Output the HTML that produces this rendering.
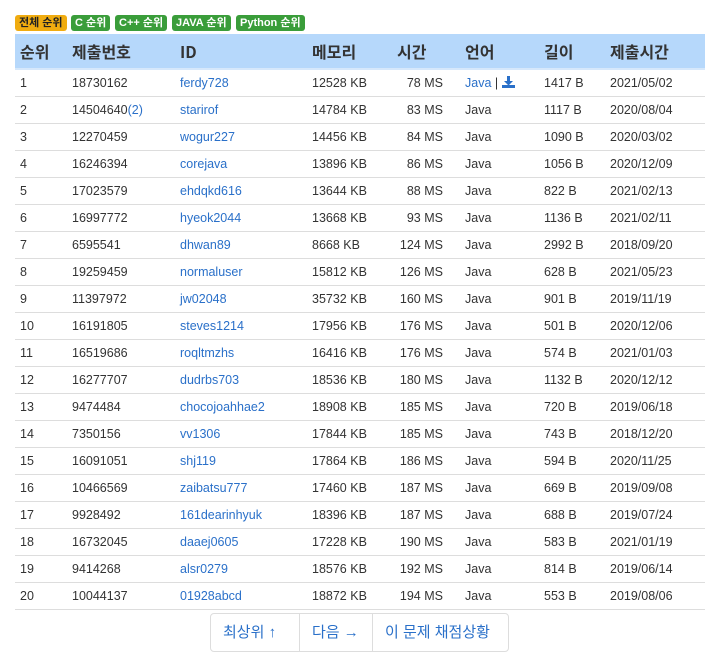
<!DOCTYPE html><html><head><meta charset="utf-8"><style>
body{margin:0;background:#fff;font-family:"Liberation Sans","Noto Sans CJK KR",sans-serif;color:#333;width:718px;height:656px;overflow:hidden;position:relative}
.b{position:absolute;top:15px;height:16px;line-height:16px;font-size:11px;font-weight:bold;color:#fff;border-radius:3px;padding:0 4px;background:#3a9d3a}
table{position:absolute;left:15px;top:34px;width:690px;border-collapse:collapse;font-size:12.5px;table-layout:fixed}
th{background:#b6d8fb;height:34px;text-align:left;font-size:16px;font-weight:bold;padding:0 0 0 5px;border-bottom:2px solid #d6e8fb;font-family:"Noto Sans CJK KR",sans-serif}
td{height:26px;padding:0 0 0 5px;border-top:1px solid #ddd;white-space:nowrap}
a{color:#2a70c9;text-decoration:none}
.r{text-align:right;padding-right:17px}
.btns{position:absolute;left:210px;top:613px;height:37px;border:1px solid #ddd;border-radius:4px;display:flex;font-size:15px;color:#2a70c9}
.btns div{padding:0 12px;line-height:37px;border-left:1px solid #ddd}
.btns div:first-child{border-left:none}
tr:last-child td{border-bottom:1px solid #ddd}
</style></head><body>
<div class="b" style="left:15px;background:#f0ac10;color:#222">전체 순위</div>
<div class="b" style="left:71px">C 순위</div>
<div class="b" style="left:115px">C++ 순위</div>
<div class="b" style="left:172px">JAVA 순위</div>
<div class="b" style="left:236px">Python 순위</div>
<table>
<colgroup><col style="width:52px"><col style="width:108px"><col style="width:132px"><col style="width:80px"><col style="width:73px"><col style="width:79px"><col style="width:66px"><col></colgroup>
<tr><th>순위</th><th>제출번호</th><th>ID</th><th>메모리</th><th style="padding-left:10px">시간</th><th>언어</th><th>길이</th><th>제출시간</th></tr>
<tr><td>1</td><td>18730162</td><td><a>ferdy728</a></td><td>12528 KB</td><td class="r">78 MS</td><td><a>Java</a> | <svg width="13" height="12" viewBox="0 0 13 12" style="vertical-align:-1px"><path d="M5 0h3v5h3l-4.5 4.5L2 5h3z" fill="#2a70c9"/><rect x="0" y="9" width="13" height="3" fill="#2a70c9"/></svg></td><td>1417 B</td><td>2021/05/02</td></tr>
<tr><td>2</td><td>14504640<a>(2)</a></td><td><a>starirof</a></td><td>14784 KB</td><td class="r">83 MS</td><td>Java</td><td>1117 B</td><td>2020/08/04</td></tr>
<tr><td>3</td><td>12270459</td><td><a>wogur227</a></td><td>14456 KB</td><td class="r">84 MS</td><td>Java</td><td>1090 B</td><td>2020/03/02</td></tr>
<tr><td>4</td><td>16246394</td><td><a>corejava</a></td><td>13896 KB</td><td class="r">86 MS</td><td>Java</td><td>1056 B</td><td>2020/12/09</td></tr>
<tr><td>5</td><td>17023579</td><td><a>ehdqkd616</a></td><td>13644 KB</td><td class="r">88 MS</td><td>Java</td><td>822 B</td><td>2021/02/13</td></tr>
<tr><td>6</td><td>16997772</td><td><a>hyeok2044</a></td><td>13668 KB</td><td class="r">93 MS</td><td>Java</td><td>1136 B</td><td>2021/02/11</td></tr>
<tr><td>7</td><td>6595541</td><td><a>dhwan89</a></td><td>8668 KB</td><td class="r">124 MS</td><td>Java</td><td>2992 B</td><td>2018/09/20</td></tr>
<tr><td>8</td><td>19259459</td><td><a>normaluser</a></td><td>15812 KB</td><td class="r">126 MS</td><td>Java</td><td>628 B</td><td>2021/05/23</td></tr>
<tr><td>9</td><td>11397972</td><td><a>jw02048</a></td><td>35732 KB</td><td class="r">160 MS</td><td>Java</td><td>901 B</td><td>2019/11/19</td></tr>
<tr><td>10</td><td>16191805</td><td><a>steves1214</a></td><td>17956 KB</td><td class="r">176 MS</td><td>Java</td><td>501 B</td><td>2020/12/06</td></tr>
<tr><td>11</td><td>16519686</td><td><a>roqltmzhs</a></td><td>16416 KB</td><td class="r">176 MS</td><td>Java</td><td>574 B</td><td>2021/01/03</td></tr>
<tr><td>12</td><td>16277707</td><td><a>dudrbs703</a></td><td>18536 KB</td><td class="r">180 MS</td><td>Java</td><td>1132 B</td><td>2020/12/12</td></tr>
<tr><td>13</td><td>9474484</td><td><a>chocojoahhae2</a></td><td>18908 KB</td><td class="r">185 MS</td><td>Java</td><td>720 B</td><td>2019/06/18</td></tr>
<tr><td>14</td><td>7350156</td><td><a>vv1306</a></td><td>17844 KB</td><td class="r">185 MS</td><td>Java</td><td>743 B</td><td>2018/12/20</td></tr>
<tr><td>15</td><td>16091051</td><td><a>shj119</a></td><td>17864 KB</td><td class="r">186 MS</td><td>Java</td><td>594 B</td><td>2020/11/25</td></tr>
<tr><td>16</td><td>10466569</td><td><a>zaibatsu777</a></td><td>17460 KB</td><td class="r">187 MS</td><td>Java</td><td>669 B</td><td>2019/09/08</td></tr>
<tr><td>17</td><td>9928492</td><td><a>161dearinhyuk</a></td><td>18396 KB</td><td class="r">187 MS</td><td>Java</td><td>688 B</td><td>2019/07/24</td></tr>
<tr><td>18</td><td>16732045</td><td><a>daaej0605</a></td><td>17228 KB</td><td class="r">190 MS</td><td>Java</td><td>583 B</td><td>2021/01/19</td></tr>
<tr><td>19</td><td>9414268</td><td><a>alsr0279</a></td><td>18576 KB</td><td class="r">192 MS</td><td>Java</td><td>814 B</td><td>2019/06/14</td></tr>
<tr><td>20</td><td>10044137</td><td><a>01928abcd</a></td><td>18872 KB</td><td class="r">194 MS</td><td>Java</td><td>553 B</td><td>2019/08/06</td></tr>
</table>
<div class="btns"><div style="width:64px">최상위 ↑</div><div style="width:48px">다음 →</div><div style="width:111px">이 문제 채점상황</div></div>
</body></html>
